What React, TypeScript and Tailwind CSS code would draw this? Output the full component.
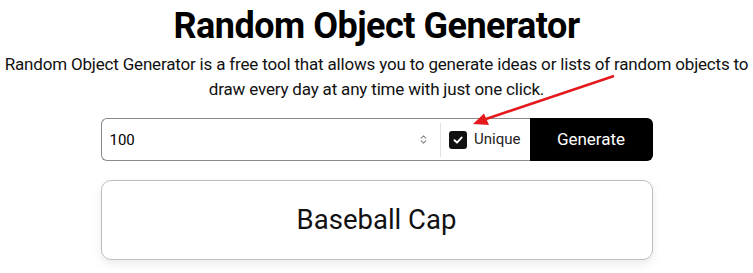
import React, { useState } from 'react';
import { ChevronsUpDown } from 'lucide-react';

const App: React.FC = () => {
  const [count, setCount] = useState('100');
  const [unique, setUnique] = useState(true);

  return (
    <div className="relative w-[753px] h-[273px] bg-white overflow-hidden font-['Roboto',sans-serif] text-black">
      <div className="flex flex-col items-center">
        <h1 className="mt-[4px] text-[36px] leading-[45px] font-bold tracking-[-0.5px]">Random Object Generator</h1>
        <p className="mt-[3px] w-[753px] text-center text-[17px] leading-[25px] text-[#111] tracking-[-0.18px] whitespace-nowrap">
          Random Object Generator is a free tool that allows you to generate ideas or lists of random objects to
          <br />
          draw every day at any time with just one click.
        </p>

        {/* input row */}
        <div className="mt-[16px] flex w-[552px] h-[43px]">
          <div className="flex flex-1 items-center border border-[#8a8a8a] border-r-0 rounded-l-[6px] bg-white">
            <input
              value={count}
              onChange={(e) => setCount(e.target.value)}
              className="flex-1 h-full bg-transparent pl-[8px] text-[15px] outline-none"
            />
            <ChevronsUpDown size={11} strokeWidth={2.5} className="mr-[11px] text-[#888]" />
            <div className="w-px h-[34px] bg-[#e2e2e2]" />
            <label className="flex items-center gap-[7px] pl-[8px] pr-[9px] text-[15px] text-[#222] cursor-pointer">
              <span
                onClick={() => setUnique(!unique)}
                className="flex items-center justify-center w-[18px] h-[18px] rounded-[3px] bg-[#111]"
              >
                {unique && (
                  <svg width="12" height="12" viewBox="0 0 12 12">
                    <path d="M2.5 6.2 L5 8.6 L9.6 3.6" fill="none" stroke="#fff" strokeWidth="2" strokeLinecap="round" strokeLinejoin="round" />
                  </svg>
                )}
              </span>
              Unique
            </label>
          </div>
          <button className="w-[123px] h-full bg-black text-white text-[17px] rounded-r-[6px]">Generate</button>
        </div>

        {/* result */}
        <div className="mt-[19px] flex w-[552px] h-[80px] items-center justify-center border border-[#bdbdbd] rounded-[10px] shadow-[0_4px_10px_rgba(0,0,0,0.08)]">
          <span className="text-[27.5px] text-[#111]">Baseball Cap</span>
        </div>
      </div>

      {/* annotation arrow */}
      <svg className="absolute left-0 top-0 pointer-events-none" width="753" height="273">
        <line x1="614" y1="76" x2="486" y2="119" stroke="#e3191c" strokeWidth="2.5" />
        <polygon points="473,124 484,113.5 489,125" fill="#e3191c" />
      </svg>
    </div>
  );
};

export default App;
